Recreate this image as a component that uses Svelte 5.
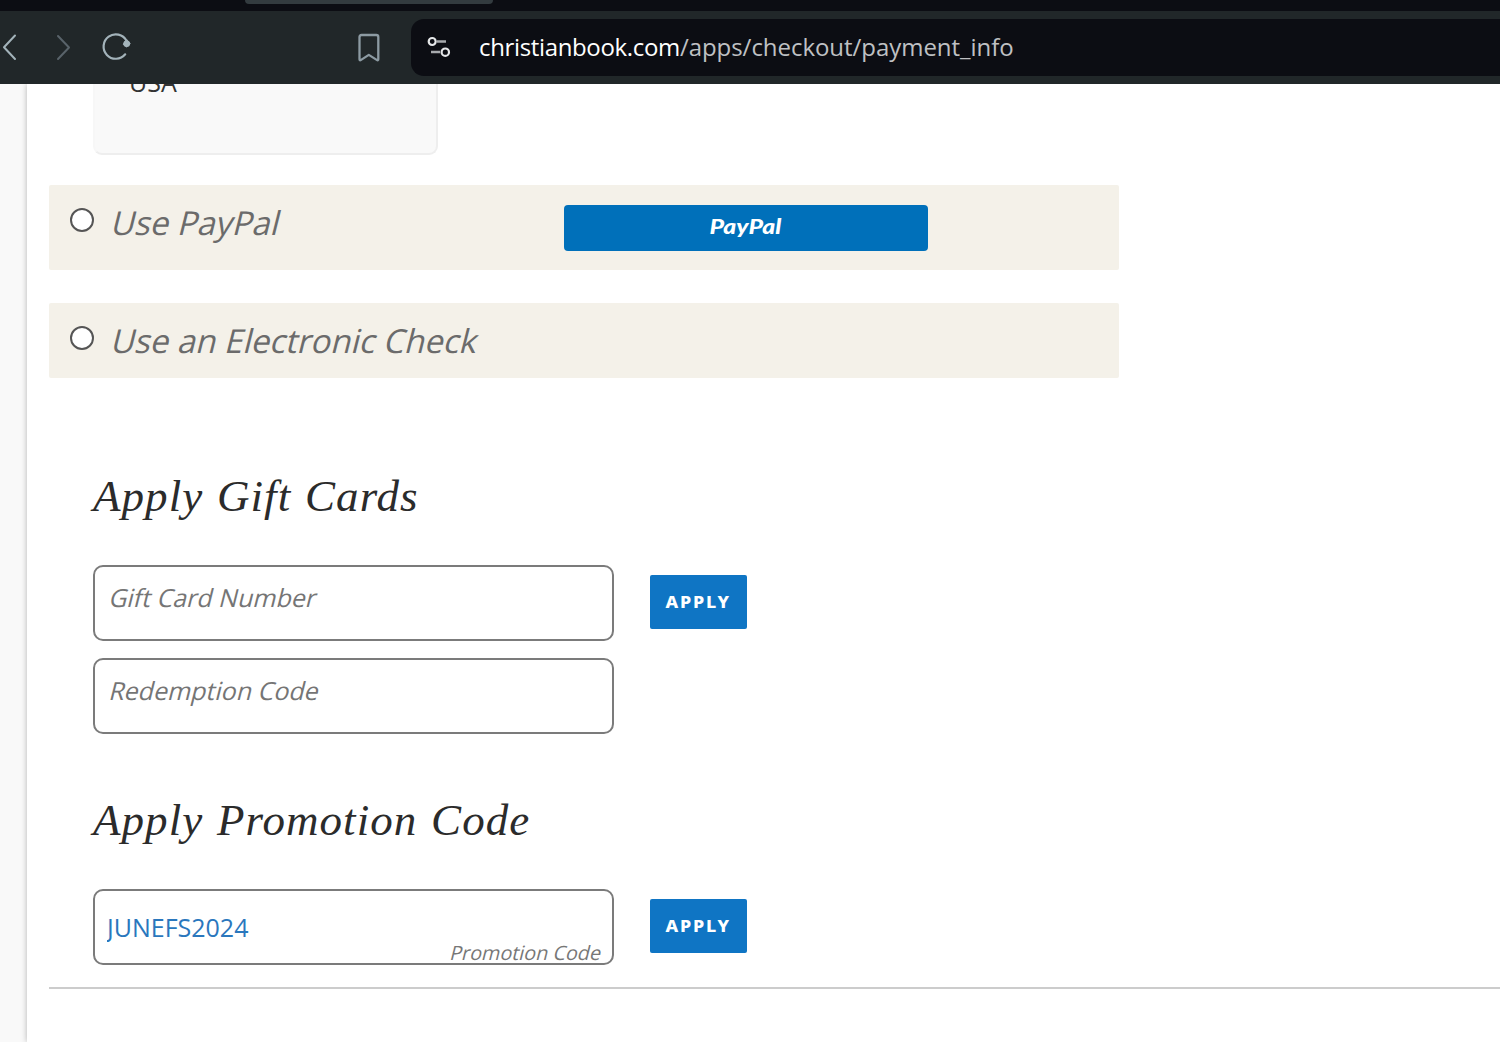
<script>
	let method = $state('');
	let giftCard = $state('');
	let redemption = $state('');
	let promo = $state('JUNEFS2024');
</script>

<div class="browser">
	<div class="tabs"><div class="tab"></div></div>
	<nav class="toolbar">
		<svg class="icons" width="160" height="73" viewBox="0 11 160 73" fill="none" stroke-linecap="round" stroke-linejoin="round">
			<path d="M15 35.5 4 47.2 15 59" stroke="#a3b3ba" stroke-width="2" />
			<path d="M58 36 69 47.5 58 59" stroke="#59636a" stroke-width="2" />
			<path d="M125.2 54.3A12.2 12.2 0 1 1 126.5 40.7" stroke="#a3b3ba" stroke-width="2.2" />
			<path d="M127 39.8 130.3 43.8 126.5 47 123.4 44.4Z" fill="#a3b3ba" stroke="#a3b3ba" stroke-width="0.8" />
			<circle cx="126.7" cy="43.8" r="3.3" fill="#a3b3ba" />
		</svg>
		<svg class="bookmark" width="24" height="30" viewBox="0 0 24 30" fill="none" stroke="#8d9ba3" stroke-width="2.3" stroke-linejoin="round">
			<path d="M4.5 2H19.3Q21.3 2 21.3 4V26.2Q21.3 28 19.7 26.9L11.8 21.9 4.1 26.9Q2.5 28 2.5 26.2V4Q2.5 2 4.5 2Z" />
		</svg>
		<div class="address">
			<svg width="24" height="24" viewBox="0 0 24 24" fill="none" stroke-width="2.2">
				<path d="M10 6.5H19M4 17H13" stroke="#a7a9ad" stroke-width="2.6" />
				<circle cx="5.2" cy="6.5" r="3.5" stroke="#e6e7e9" />
				<circle cx="18.3" cy="17.2" r="3.7" stroke="#e6e7e9" />
			</svg>
			<span class="url"><b>christianbook.com</b><span class="path">/apps/checkout/payment_info</span></span>
		</div>
	</nav>
</div>

<main>
	<section class="card"><p>USA</p></section>

	<label class="method paypal">
		<input type="radio" name="method" value="paypal" bind:group={method} />
		<span class="name slanted">Use PayPal</span>
		<button class="paypal-btn" type="button"><span>PayPal</span></button>
	</label>
	<label class="method check">
		<input type="radio" name="method" value="check" bind:group={method} />
		<span class="name slanted">Use an Electronic Check</span>
	</label>

	<h2 class="gift-title">Apply Gift Cards</h2>
	<form class="row" onsubmit={(e) => e.preventDefault()}>
		<div class="fields">
			<div class="control">
				<input id="gift" class="field" bind:value={giftCard} />
				{#if !giftCard}<label class="placeholder slanted" for="gift">Gift Card Number</label>{/if}
			</div>
			<div class="control">
				<input id="redemption" class="field" bind:value={redemption} />
				{#if !redemption}<label class="placeholder slanted" for="redemption">Redemption Code</label>{/if}
			</div>
		</div>
		<button class="apply"><span>APPLY</span></button>
	</form>

	<h2 class="promo-title">Apply Promotion Code</h2>
	<form class="row" onsubmit={(e) => e.preventDefault()}>
		<div class="fields">
			<div class="control">
				<input id="promo" class="field" bind:value={promo} />
				<label class="hint slanted" for="promo">Promotion Code</label>
			</div>
		</div>
		<button class="apply"><span>APPLY</span></button>
	</form>
	<hr />
</main>

<style>
	:global(body) {
		background: #f9f9f9;
		overflow: hidden;
	}

	.tabs {
		height: 11px;
		background: #0c0d13;
	}

	.tab {
		width: 248px;
		height: 4px;
		margin-left: 245px;
		background: #333b3f;
		border-radius: 0 0 7px 7px;
	}

	.browser {
		position: relative;
		z-index: 1;
		overflow: hidden;
	}

	.toolbar {
		display: flex;
		align-items: center;
		height: 73px;
		background: #212729;
	}

	.icons {
		flex: none;
	}

	.bookmark {
		flex: none;
		margin-left: 197px;
	}

	.address {
		display: flex;
		align-items: center;
		flex: 1;
		height: 57px;
		margin-left: 30px;
		margin-bottom: 1px;
		padding-left: 16px;
		background: #0c0d13;
		border-radius: 13px 0 0 13px;
	}

	.url {
		margin-left: 28px;
		font: 24px/32px 'Open Sans', sans-serif;
		color: #bfc0c3;
		white-space: nowrap;
		letter-spacing: -0.04px;
	}

	.url b {
		font-weight: 500;
		color: #fff;
		letter-spacing: -0.35px;
	}

	main {
		box-sizing: border-box;
		height: 958px;
		margin-left: 27px;
		padding-left: 22px;
		background: #fff;
		box-shadow: 0 0 6px rgba(0, 0, 0, 0.28);
		font-family: 'Open Sans', sans-serif;
		overflow: hidden;
		clip-path: inset(0 0 0 -12px);
	}

	/* upright face leaned over, keeps the double-storey a */
	.slanted {
		transform: skewX(-14deg);
		transform-origin: 0 78%;
	}

	.card {
		box-sizing: border-box;
		width: 345px;
		height: 71px;
		margin-left: 44px;
		padding-left: 36px;
		background: #f9f9f9;
		border: 2px solid #eee;
		border-top: 0;
		border-left-color: #f7f7f7;
		border-radius: 0 0 9px 9px;
		overflow: hidden;
	}

	.card p {
		margin: -19px 0 0 -2px;
		font-size: 25px;
		line-height: 34px;
		color: #333;
	}

	.method {
		display: flex;
		align-items: flex-start;
		box-sizing: border-box;
		width: 1070px;
		padding: 20px 0 0 21px;
		background: #f4f1e9;
		border-radius: 2px;
	}

	.paypal {
		height: 85px;
		margin-top: 30px;
	}

	.check {
		height: 75px;
		margin-top: 33px;
	}

	.method input {
		appearance: none;
		box-sizing: border-box;
		flex: none;
		width: 24px;
		height: 24px;
		margin: 3px 16px 0 0;
		background: #fff;
		border: 2px solid #555;
		border-radius: 50%;
	}

	.name {
		width: 454px;
		font-size: 33px;
		line-height: 36px;
		color: #6b6b6b;
		white-space: nowrap;
	}

	.paypal-btn {
		width: 364px;
		height: 46px;
		padding: 0 2px 4px 0;
		background: #0070ba;
		border: 0;
		border-radius: 4px;
		color: #fff;
		font: italic 900 21px/42px Lato, sans-serif;
	}

	.paypal-btn span {
		display: inline-block;
		transform: scaleX(1.18);
	}

	h2 {
		margin: 0 0 0 44px;
		font: italic 400 45px/52px 'Liberation Serif', serif;
		color: #2b2b2b;
		white-space: nowrap;
		letter-spacing: 1.05px;
		word-spacing: 1.5px;
	}

	.gift-title {
		margin-top: 92px;
		margin-bottom: 43px;
	}

	.promo-title {
		margin-top: 60px;
		margin-bottom: 43px;
	}

	.row {
		display: flex;
		align-items: flex-start;
		margin-left: 44px;
	}

	.fields {
		display: flex;
		flex-direction: column;
		gap: 17px;
		width: 521px;
	}

	.control {
		position: relative;
		height: 76px;
	}

	.field {
		box-sizing: border-box;
		width: 521px;
		height: 76px;
		margin: 0;
		padding: 0 12px;
		background: #fff;
		border: 2px solid #7b7b7b;
		border-radius: 10px;
		font: 25px 'Open Sans', sans-serif;
		color: #2a77bd;
	}

	.placeholder {
		position: absolute;
		left: 15px;
		top: 15px;
		font-size: 25px;
		line-height: 34px;
		color: #757575;
		white-space: nowrap;
	}

	.hint {
		position: absolute;
		right: 14px;
		bottom: 0;
		font-size: 19.8px;
		line-height: 24px;
		color: #777;
		white-space: nowrap;
	}

	.apply {
		width: 97px;
		height: 54px;
		margin: 10px 0 0 36px;
		padding: 0;
		background: #0f75c4;
		border: 0;
		border-radius: 2px;
		color: #fff;
		font: 800 16px/54px 'Noto Sans', sans-serif;
		letter-spacing: 1.6px;
	}

	.apply span {
		display: inline-block;
		transform: scaleX(1.12);
	}

	hr {
		height: 2px;
		margin: 22px 0 0;
		background: #ccc;
		border: 0;
	}
</style>
